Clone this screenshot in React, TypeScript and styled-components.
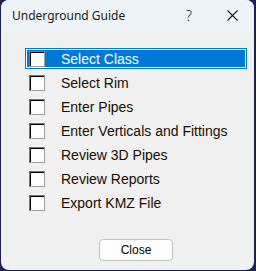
import React, { useState } from "react";
import styled, { createGlobalStyle } from "styled-components";

const GlobalStyle = createGlobalStyle`
  html, body {
    margin: 0;
    padding: 0;
    background: #1f1f52;
  }
  body {
    width: 256px;
    height: 271px;
    overflow: hidden;
  }
`;

const steps = [
  "Select Class",
  "Select Rim",
  "Enter Pipes",
  "Enter Verticals and Fittings",
  "Review 3D Pipes",
  "Review Reports",
  "Export KMZ File",
];

const App = () => {
  const [selected, setSelected] = useState(0);
  const [checked, setChecked] = useState<boolean[]>(steps.map(() => false));

  const toggle = (i: number) =>
    setChecked((prev) => prev.map((v, j) => (j === i ? !v : v)));

  return (
    <>
      <GlobalStyle />
      <Window>
        <TitleBar>
          <Title>Underground Guide</Title>
          <HelpButton>?</HelpButton>
          <CloseButton>
            <svg width="11" height="11" viewBox="0 0 11 11">
              <path d="M0.5 0.5 L10.5 10.5 M10.5 0.5 L0.5 10.5" stroke="#1a1a1a" strokeWidth="1.1" />
            </svg>
          </CloseButton>
        </TitleBar>
        <Body>
          <StepList>
            {steps.map((label, i) => (
              <StepRow key={label} $active={selected === i} onClick={() => setSelected(i)}>
                <CheckBox
                  $checked={checked[i]}
                  onClick={(e) => {
                    e.stopPropagation();
                    toggle(i);
                  }}
                />
                <StepLabel>{label}</StepLabel>
              </StepRow>
            ))}
          </StepList>
          <Footer>
            <DialogButton>Close</DialogButton>
          </Footer>
        </Body>
      </Window>
    </>
  );
};

const Window = styled.div`
  display: flex;
  flex-direction: column;
  width: 253px;
  height: 270px;
  margin-left: 1px;
  border-radius: 8px;
  overflow: hidden;
  background: #f0f0f0;
`;

const TitleBar = styled.div`
  display: flex;
  align-items: center;
  height: 31px;
  padding-left: 11px;
  background: #eef3f8;
  font-family: "Noto Sans", "Open Sans", sans-serif;
  font-size: 12px;
  color: #1a1a1a;
`;

const Title = styled.span`
  flex: 1;
  padding-bottom: 1px;
`;

const HelpButton = styled.div`
  display: flex;
  justify-content: center;
  align-items: center;
  width: 44px;
  height: 100%;
  font-size: 14px;
  font-weight: 300;
`;

const CloseButton = styled.div`
  display: flex;
  justify-content: center;
  align-items: center;
  width: 43px;
  height: 100%;
`;

const Body = styled.div`
  display: flex;
  flex-direction: column;
  flex: 1;
  padding: 17px 0 0 24px;
`;

const StepList = styled.div`
  display: flex;
  flex-direction: column;
  gap: 3px;
  width: 222px;
`;

const StepRow = styled.div<{ $active: boolean }>`
  display: flex;
  align-items: center;
  height: 21px;
  padding-left: 4px;
  gap: 16px;
  font-family: "Liberation Sans", Arial, sans-serif;
  font-size: 14px;
  color: ${({ $active }) => ($active ? "#ffffff" : "#1a0d00")};
  background: ${({ $active }) => ($active ? "#0078d7" : "transparent")};
  box-shadow: ${({ $active }) =>
    $active ? "inset 0 0 0 1px #0078d7, inset 0 0 0 2px #ffffff" : "none"};
  cursor: default;
`;

const CheckBox = styled.div<{ $checked: boolean }>`
  box-sizing: border-box;
  width: 16px;
  height: 16px;
  flex-shrink: 0;
  background: #ffffff;
  border-top: 1px solid #7a7a7a;
  border-left: 1px solid #7a7a7a;
  border-right: 1px solid #a0a0a0;
  border-bottom: 1px solid #a0a0a0;
  box-shadow: inset 1px 1px 0 #000000;
`;

const StepLabel = styled.span`
  white-space: nowrap;
`;

const Footer = styled.div`
  display: flex;
  padding: 26px 0 0 74px;
`;

const DialogButton = styled.button`
  width: 74px;
  height: 22px;
  padding: 0;
  border: 1px solid #c4c4c4;
  border-radius: 4px;
  background: #fdfdfd;
  font-family: "Liberation Sans", Arial, sans-serif;
  font-size: 12px;
  color: #000000;
`;

export default App;
